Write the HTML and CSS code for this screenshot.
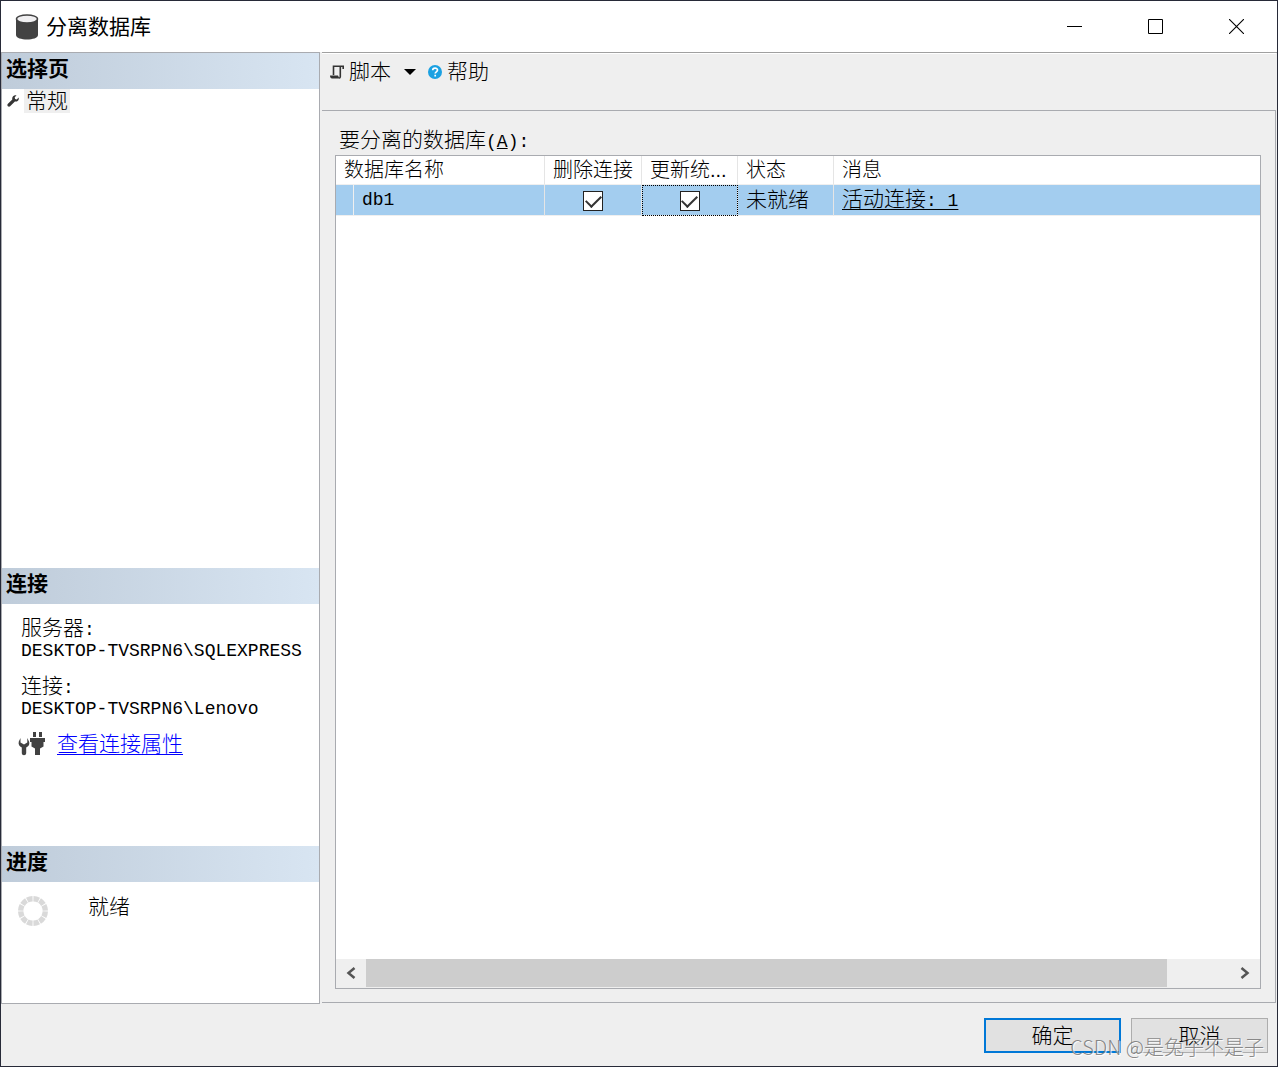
FILE: index.html
```html
<!DOCTYPE html>
<html lang="zh-CN">
<head>
<meta charset="utf-8">
<title>分离数据库</title>
<link rel="stylesheet" href="styles.css">
</head>
<body>
<div class="window">
  <header class="titlebar">
    <svg class="title-icon" width="24" height="26" viewBox="0 0 24 26" aria-hidden="true">
      <path d="M1 5v16c0 6 22 6 22 0V5z" fill="#424242"/>
      <ellipse cx="12" cy="5" rx="10.5" ry="4" fill="#f0eff1" stroke="#424242" stroke-width="1.5"/>
    </svg>
    <h1 class="title">分离数据库</h1>
    <div class="controls">
      <button class="control" type="button" aria-label="最小化"><svg width="15" height="15"><path d="M0 7.500h15" stroke="#000"/></svg></button>
      <button class="control" type="button" aria-label="最大化"><svg width="15" height="15"><path d="M.5.5h14v14H.5z" fill="none" stroke="#000"/></svg></button>
      <button class="control" type="button" aria-label="关闭"><svg width="15" height="15"><path d="M0 0l15 15M15 0L0 15" stroke="#000" stroke-width="1.1"/></svg></button>
    </div>
  </header>

  <div class="content">
    <aside class="sidebar">
      <section class="pages">
        <h2 class="heading">选择页</h2>
        <a class="page-link" href="#general">
          <svg width="12" height="12" viewBox="0 0 12 12" aria-hidden="true"><path d="M9.500.4L7.700 2.300l.4 1.700 1.700.4 1.800-1.800c.8 2.500-1.300 4.500-3.700 3.900L3.100 11.300C1.600 12.500-.4 10.700.7 9.100L5.300 4.400C4.700 1.700 7-.4 9.500.4z" fill="#353535"/></svg>
          <span class="page-name">常规</span>
        </a>
      </section>
      <section class="connection">
        <h2 class="heading">连接</h2>
        <dl class="details">
          <dt>服务器<span class="mono">:</span></dt>
          <dd class="mono">DESKTOP-TVSRPN6\SQLEXPRESS</dd>
          <dt>连接<span class="mono">:</span></dt>
          <dd class="mono">DESKTOP-TVSRPN6\Lenovo</dd>
        </dl>
        <div class="properties">
          <svg width="27" height="24" viewBox="0 0 27 24" aria-hidden="true">
            <path d="M2.500 6L.8 9.500c-.8 3 .7 5 3 6V21c0 3 4.400 3 4.400 0v-5.500c2.300-1 3.800-3 2.800-6L9.300 6v4.500L6 12.500l-3.500-2z" fill="#424242"/>
            <path d="M15 0h3v5h-3zM21 0h3v5h-3zM12 6h15v4h-1.500v4.500l-3.500 2V23h-5v-6.500l-3.500-2V10H12z" fill="#424242"/>
          </svg>
          <a class="properties-link" href="#properties">查看连接属性</a>
        </div>
      </section>
      <section class="progress">
        <h2 class="heading">进度</h2>
        <div class="status">
          <svg width="30" height="30" viewBox="0 0 30 30" aria-hidden="true"><circle cx="15" cy="15" r="12.300" fill="none" stroke="#d9d9d9" stroke-width="5.400" pathLength="120" stroke-dasharray="8.600 1.400" stroke-dashoffset="-.7"/></svg>
          <span>就绪</span>
        </div>
      </section>
    </aside>

    <main class="main">
      <div class="toolbar">
        <button class="tool" type="button">
          <svg class="script-icon" width="14" height="14" viewBox="0 0 14 14" aria-hidden="true"><path d="M3.500 10V1.200h9.700V4M10.300 1.200v10.500c0 1-.6 1.300-1.300 1.300" fill="none" stroke="#333" stroke-width="1.600"/><path d="M0 10.500h8l1.500 3H2C.8 13.500 0 12.500 0 10.500z" fill="#333"/></svg>
          脚本
          <svg class="caret" width="12" height="6" aria-hidden="true"><path d="M0 0h12L6 6z"/></svg>
        </button>
        <button class="tool" type="button">
          <svg width="14" height="14" viewBox="0 0 14 14" aria-hidden="true"><circle cx="7" cy="7" r="7" fill="#1ba1e2"/><path d="M4.700 5.200C4.700 2.500 9.500 2.500 9.500 5.100 9.500 6.900 7.200 6.800 7.200 8.600M7.200 9.800v1.800" fill="none" stroke="#fff" stroke-width="1.700"/></svg>
          帮助
        </button>
      </div>
      <div class="panel">
        <div class="caption" id="caption">要分离的数据库<span class="mono">(<u>A</u>):</span></div>
        <div class="grid">
          <table class="table" aria-labelledby="caption">
            <colgroup><col class="col-name"><col class="col-drop"><col class="col-state"><col class="col-state"><col></colgroup>
            <thead>
              <tr><th>数据库名称</th><th>删除连接</th><th>更新统...</th><th>状态</th><th>消息</th></tr>
            </thead>
            <tbody>
              <tr>
                <td class="name-cell"><span class="row-name mono">db1</span></td>
                <td class="check-cell"><input class="check" type="checkbox" aria-label="删除连接" checked></td>
                <td class="check-cell focused"><input class="check" type="checkbox" aria-label="更新统计信息" checked></td>
                <td>未就绪</td>
                <td><a class="message" href="#message">活动连接<span class="mono">: 1</span></a></td>
              </tr>
            </tbody>
          </table>
          <div class="scrollbar">
            <button class="arrow" type="button" aria-label="向左滚动"><svg width="10" height="12"><path d="M8.500 1L2.500 6l6 5" fill="none" stroke="#555" stroke-width="2.500"/></svg></button>
            <div class="track"><div class="thumb"></div></div>
            <button class="arrow" type="button" aria-label="向右滚动"><svg width="10" height="12"><path d="M1.500 1l6 5-6 5" fill="none" stroke="#555" stroke-width="2.500"/></svg></button>
          </div>
        </div>
      </div>
    </main>
  </div>

  <footer class="footer">
    <button class="button primary" type="button">确定</button>
    <button class="button" type="button">取消</button>
  </footer>
  <div class="watermark">CSDN @是兔子不是子</div>
</div>
</body>
</html>
```
FILE: styles.css
```css
* { box-sizing: border-box; }

body {
  margin: 0;
  color: #000;
  font-family: "Liberation Sans", "Noto Sans CJK SC", sans-serif;
  font-size: 21px;
  font-weight: 300;
  line-height: 22px;
}

h1, h2, dl, dd { margin: 0; }

button {
  padding: 0;
  border: 0;
  background: none;
  color: inherit;
  font: inherit;
}

.mono {
  font-family: "Liberation Mono", monospace;
  font-size: 18px;
}

.window {
  position: relative;
  display: flex;
  flex-direction: column;
  min-height: 100vh;
  border: 1px solid #272a38;
  background: #efefef;
}

.titlebar {
  display: flex;
  align-items: center;
  height: 51px;
  padding-left: 14px;
  background: #fff;
}

.title {
  flex: 1;
  margin-left: 7px;
  font-size: 21px;
  font-weight: 400;
}

.controls { display: flex; }

.control {
  display: grid;
  place-items: center;
  width: 81px;
  height: 50px;
}

.content {
  display: flex;
  flex: 1;
  gap: 2px;
}

.sidebar {
  display: flex;
  flex-direction: column;
  width: 319px;
  border: 1px solid #a9abb0;
  background: #fff;
}

.heading {
  height: 36px;
  padding: 5px 4px;
  background: linear-gradient(90deg, #bfccda, #d8e5f2);
  font-size: 21px;
  font-weight: 700;
}

.pages { flex: 1; }

.page-link {
  display: flex;
  align-items: center;
  gap: 5px;
  padding-left: 5px;
  color: inherit;
  text-decoration: none;
}

.page-name {
  padding: 1px 2px;
  background: #efefef;
}

.connection { min-height: 278px; }

.details {
  padding: 13px 0 0 19px;
  white-space: nowrap;
}

.details dd { line-height: 20px; }

.details dd + dt { margin-top: 14px; }

.properties {
  display: flex;
  align-items: center;
  gap: 12px;
  margin-top: 13px;
  padding-left: 16px;
}

.properties-link {
  color: #00f;
  text-decoration-thickness: 1px;
  text-underline-offset: 3px;
}

.progress { min-height: 157px; }

.status {
  display: flex;
  gap: 40px;
  padding: 14px 16px;
}

.main {
  display: flex;
  flex: 1;
  flex-direction: column;
  min-width: 0;
  padding-right: 1px;
  padding-bottom: 1px;
  border-top: 1px solid #a0a0a0;
}

.toolbar {
  display: flex;
  align-items: flex-start;
  gap: 12px;
  height: 57px;
  padding: 7px 8px;
  border-top: 1px solid #fff;
}

.tool {
  display: flex;
  align-items: center;
  gap: 5px;
}

.caret { margin-left: 8px; }

.panel {
  display: flex;
  flex: 1;
  flex-direction: column;
  padding: 18px 14px 13px 13px;
  border: 1px solid #a9abb0;
  border-left: 0;
}

.caption {
  height: 26px;
  padding-left: 4px;
}

.grid {
  display: flex;
  flex: 1;
  flex-direction: column;
  justify-content: space-between;
  border: 1px solid #a9abb0;
  background: #fff;
}

.table {
  width: 100%;
  border-collapse: separate;
  border-spacing: 0;
  table-layout: fixed;
}

.col-name { width: 209px; }
.col-drop { width: 97px; }
.col-state { width: 96px; }

th, td {
  padding: 0 8px;
  border-right: 1px solid #e5e5e5;
  text-align: left;
  white-space: nowrap;
}

th {
  height: 29px;
  border-bottom: 1px solid #efefef;
  font-size: 20px;
  font-weight: 300;
}

td {
  height: 31px;
  border-bottom: 1px solid #efefef;
  background: #a3cdef;
}

th:last-child, td:last-child { border-right: 0; }

.name-cell { padding: 0 0 0 17px; }

.row-name {
  display: block;
  padding-left: 8px;
  border-left: 1px solid #efefef;
  line-height: 30px;
}

.check-cell { text-align: center; }

.focused {
  outline: 1px dotted #000;
  outline-offset: -1px;
}

.check {
  display: inline-grid;
  place-items: center;
  width: 20px;
  height: 20px;
  margin: 0;
  border: 1px solid #222;
  background: #fff;
  appearance: none;
  vertical-align: middle;
}

.check:checked::before {
  width: 13px;
  height: 7px;
  margin-bottom: 4px;
  border-bottom: 2px solid #333;
  border-left: 2px solid #333;
  content: "";
  transform: rotate(-45deg);
}

.message {
  color: inherit;
  text-decoration-thickness: 1px;
  text-underline-offset: 3px;
}

.scrollbar {
  display: flex;
  height: 29px;
  padding-bottom: 1px;
  background: #efefef;
}

.arrow {
  display: grid;
  place-items: center;
  width: 30px;
}

.track {
  flex: 1;
  padding-right: 63px;
}

.thumb {
  height: 100%;
  background: #cdcdcd;
}

.footer {
  display: flex;
  justify-content: flex-end;
  gap: 10px;
  padding: 14px 9px 13px;
}

.button {
  width: 137px;
  height: 35px;
  border: 1px solid #adadad;
  background: #e1e1e1;
}

.primary { border: 2px solid #0078d7; }

.watermark {
  position: absolute;
  right: 13px;
  bottom: 8px;
  color: #777d;
  font-family: "Noto Sans CJK SC", sans-serif;
  font-size: 20px;
  text-shadow: 1px 1px 1px #fff;
  pointer-events: none;
}
```
